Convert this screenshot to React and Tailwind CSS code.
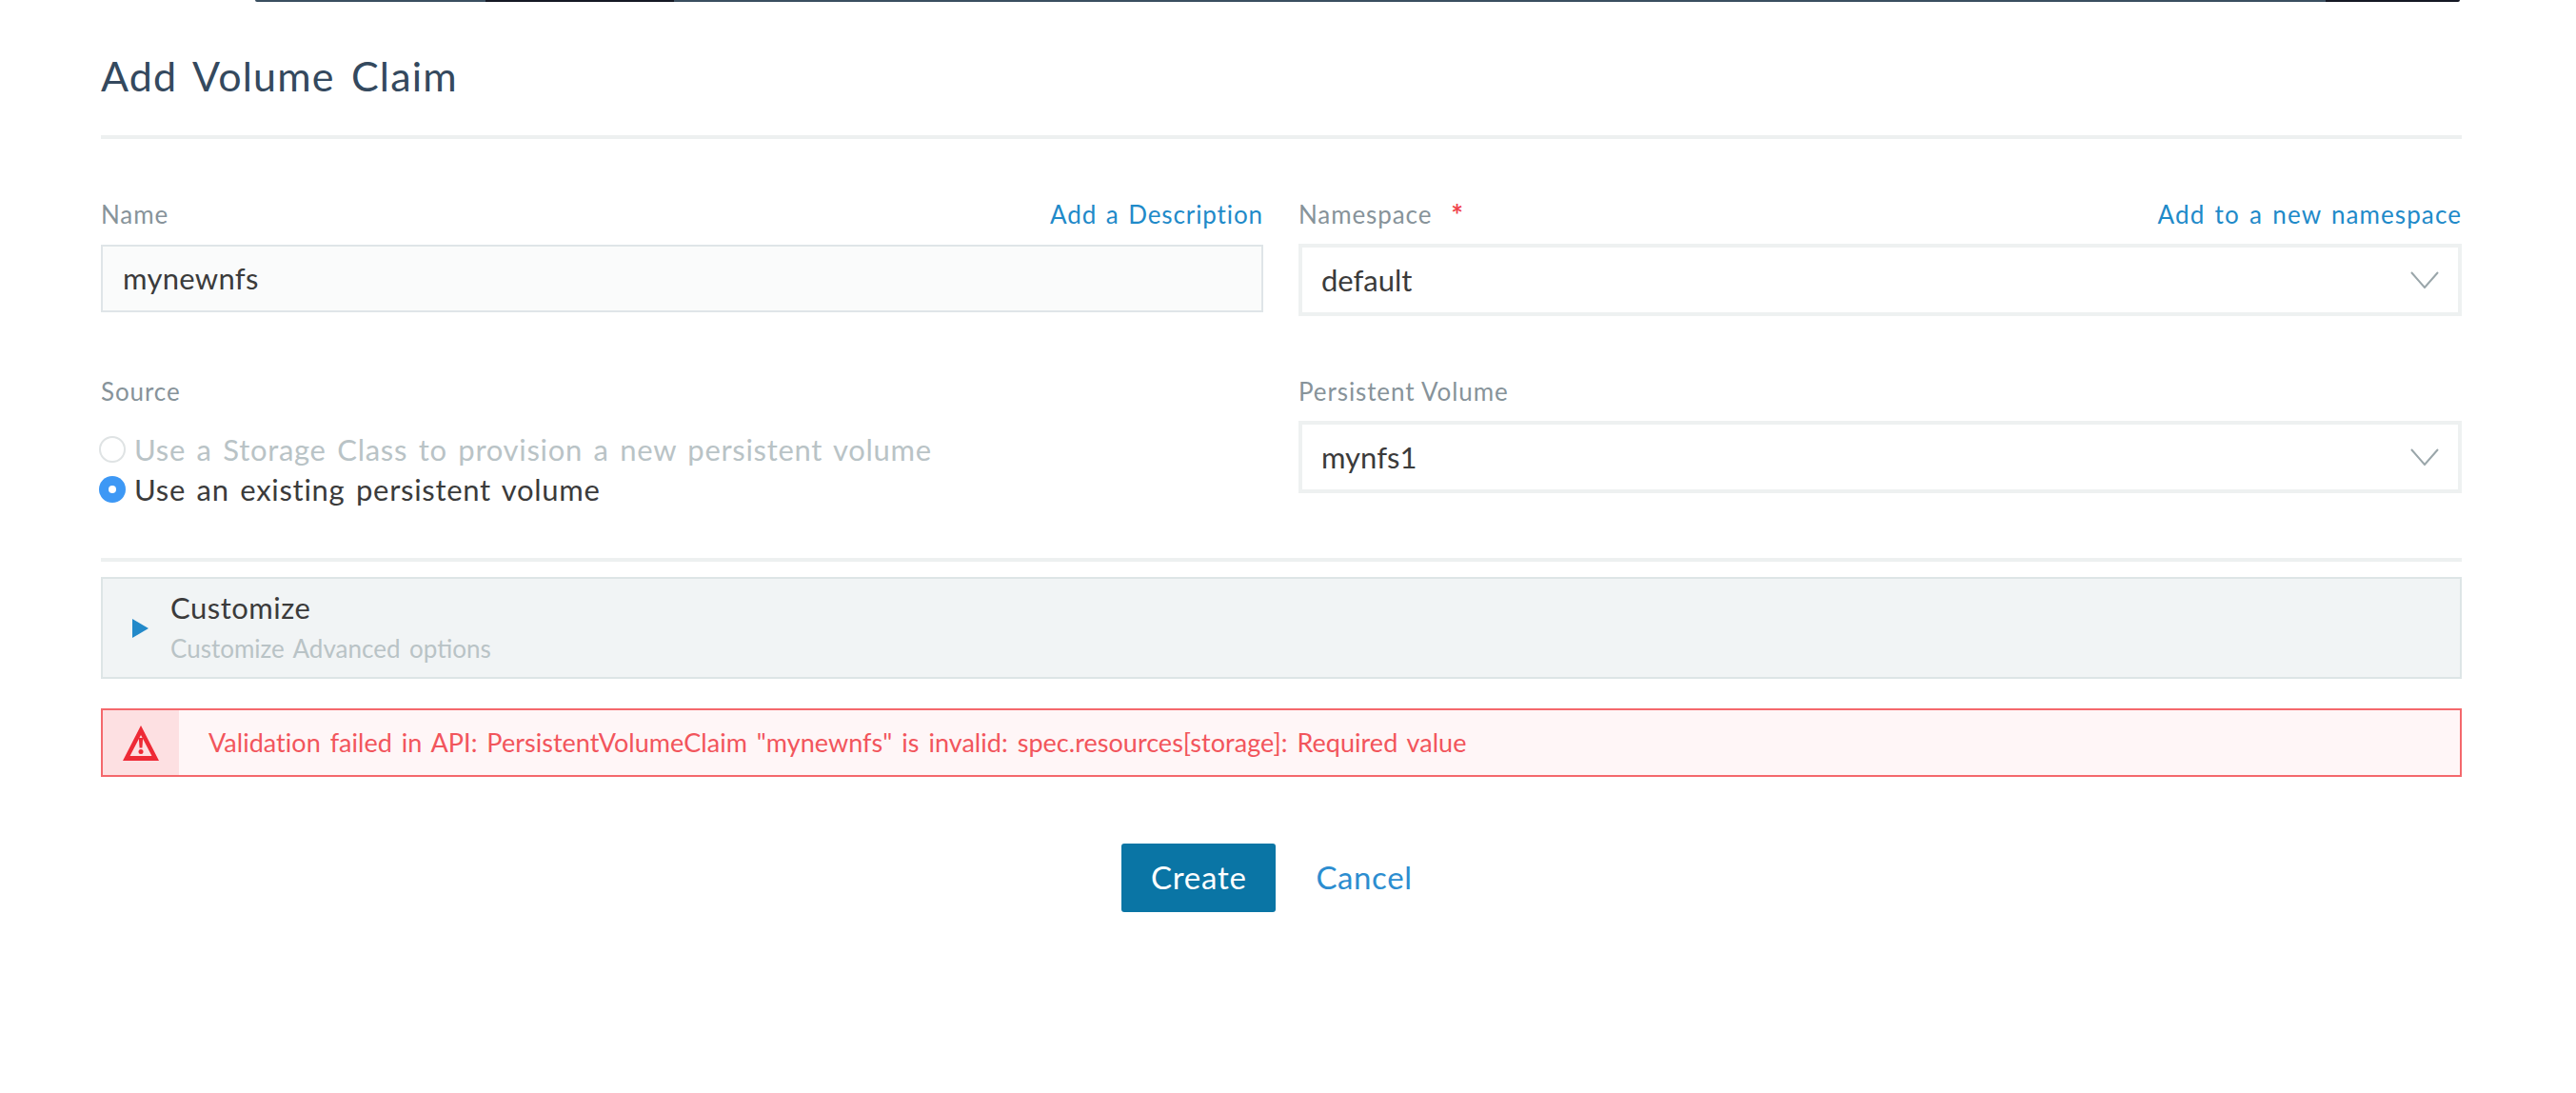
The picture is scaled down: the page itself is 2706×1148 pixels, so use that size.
function Chevron() {
  return (
    <svg width="30" height="18" viewBox="0 0 30 18" fill="none" className="shrink-0">
      <polyline points="1,1 15,17 29,1" stroke="#9aa6aa" strokeWidth="2" />
    </svg>
  );
}

function SelectBox({ value }) {
  return (
    <div className="h-[76px] border-4 border-[#eef1f1] bg-white flex items-center justify-between pl-5 pr-[20px]">
      <span className="text-[31px] leading-[36px] text-[#3b3b3b] [word-spacing:3px]">{value}</span>
      <Chevron />
    </div>
  );
}

function WarningIcon() {
  return (
    <svg width="38" height="37" viewBox="0 0 38 37">
      <path d="M19 0 L38 37 L0 37 Z M19 10 L7.5 32 L30.5 32 Z" fill="#ee2a36" fillRule="evenodd" />
      <path d="M16.8 13 H21.2 L20.4 23.5 H17.6 Z" fill="#ee2a36" />
      <circle cx="19" cy="27.6" r="2.5" fill="#ee2a36" />
    </svg>
  );
}

export default function App() {
  return (
    <div className="min-h-[1148px] bg-white font-['Lato',sans-serif] pl-[106px] pr-[120px]">
      {/* strip of the page behind the dialog */}
      <div className="flex h-[2px] ml-[162px] mr-[2px] rounded-b-sm overflow-hidden">
        <div className="w-[242px] bg-[#3a4f60]" />
        <div className="w-[198px] bg-[#141824]" />
        <div className="w-[1735px] bg-[#3a4f60]" />
        <div className="flex-1 bg-[#141824]" />
      </div>

      <h1 className="h-[140px] pt-[50px] text-[43px] leading-[56px] text-[#34495e] tracking-[1.2px] [word-spacing:5px]">
        Add Volume Claim
      </h1>
      <div className="h-1 bg-[#edf0f0]" />

      <div className="grid grid-cols-[1221px_1222px] gap-x-[37px] mt-[62px]">
        <div>
          <div className="flex justify-between items-center h-[34px] mb-[15px] text-[26px]">
            <span className="text-[#87939a] tracking-[0.9px]">Name</span>
            <span className="text-[#1f8ac9] tracking-[0.9px] [word-spacing:2px]">Add a Description</span>
          </div>
          <div className="h-[71px] border-2 border-[#dfe5e8] bg-[#fafbfb] flex items-center pl-[21px] text-[31px] text-[#3b3b3b] tracking-[0.3px]">
            mynewnfs
          </div>
        </div>
        <div>
          <div className="flex justify-between items-center h-[34px] mb-[14px] text-[26px]">
            <span className="text-[#87939a] tracking-[0.9px] flex items-center">
              Namespace<span className="text-[#f0444c] ml-5 text-[30px] leading-none font-bold">*</span>
            </span>
            <span className="text-[#1f8ac9] tracking-[1.1px] [word-spacing:2.5px]">Add to a new namespace</span>
          </div>
          <SelectBox value="default" />
        </div>
      </div>

      <div className="grid grid-cols-[1221px_1222px] gap-x-[37px] mt-[63px]">
        <div>
          <div className="h-[34px] mb-[22px] text-[26px] leading-[32px] text-[#87939a] tracking-[0.9px]">Source</div>
          <div className="flex items-center gap-[9px] h-[42px] -ml-[2px] text-[31px] text-[#b9c3c6] tracking-[0.7px] [word-spacing:3px]">
            <span className="w-7 h-7 rounded-full border-2 border-[#dfe3e4] bg-white shrink-0" />
            Use a Storage Class to provision a new persistent volume
          </div>
          <div className="flex items-center gap-[9px] h-[42px] -ml-[2px] text-[31px] text-[#3b3b3b] tracking-[0.7px] [word-spacing:3px]">
            <span className="w-7 h-7 rounded-full bg-[#3d98f5] flex items-center justify-center shrink-0">
              <span className="w-2 h-2 rounded-full bg-white" />
            </span>
            Use an existing persistent volume
          </div>
        </div>
        <div>
          <div className="h-[34px] mb-[13px] text-[26px] leading-[32px] text-[#87939a] tracking-[0.9px]">Persistent Volume</div>
          <SelectBox value="mynfs1" />
        </div>
      </div>

      <div className="h-1 bg-[#edf0f0] mt-[51px]" />

      <div className="mt-4 h-[107px] border-2 border-[#dde5e6] bg-[#f1f4f5] flex items-center pl-[31px]">
        <svg width="17" height="20" viewBox="0 0 17 20" className="shrink-0">
          <path d="M0 0 L17 10 L0 20 Z" fill="#2389c9" />
        </svg>
        <div className="ml-[23px] pb-1">
          <div className="text-[31px] leading-[40px] text-[#3b3b3b] tracking-[0.5px]">Customize</div>
          <div className="mt-[6px] text-[26px] leading-[34px] text-[#b9c3c6] [word-spacing:3px]">
            Customize Advanced options
          </div>
        </div>
      </div>

      <div className="mt-[31px] h-[72px] border-2 border-[#f4686c] bg-[#fff6f7] flex items-center">
        <div className="w-[80px] h-full bg-[#fde0e2] flex items-center justify-center shrink-0">
          <WarningIcon />
        </div>
        <div className="ml-[31px] text-[27px] text-[#f2555c] tracking-[0.03px] [word-spacing:3px]">
          Validation failed in API: PersistentVolumeClaim "mynewnfs" is invalid: spec.resources[storage]: Required value
        </div>
      </div>

      <div className="mt-[70px] flex justify-center items-center gap-[42px] pr-[30px]">
        <button className="w-[162px] h-[72px] rounded-[3px] bg-[#0a75a5] text-white text-[33px] tracking-[0.8px]">Create</button>
        <span className="text-[33px] text-[#2c8dd0] tracking-[0.6px]">Cancel</span>
      </div>
    </div>
  );
}
